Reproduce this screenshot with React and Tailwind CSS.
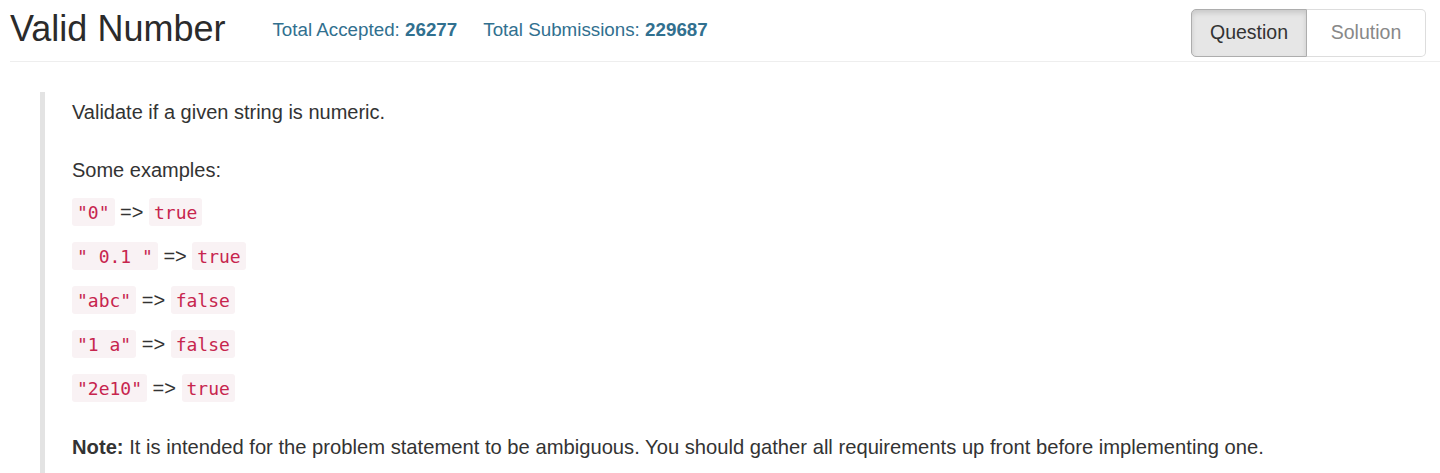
export default function App() {
  const examples = [
    ['"0"', "true"],
    ['" 0.1 "', "true"],
    ['"abc"', "false"],
    ['"1 a"', "false"],
    ['"2e10"', "true"],
  ];

  const Code = ({ children }) => (
    <code className="font-['DejaVu_Sans_Mono',monospace] text-[18px] leading-[20px] text-[#c7254e] bg-[#f9f2f4] rounded-[3px] px-[5px] pt-[4px] pb-[3px] whitespace-pre">
      {children}
    </code>
  );

  return (
    <div className="h-screen bg-white font-['Liberation_Sans',Arial,sans-serif] text-[#333] overflow-hidden">
      <div className="ml-[10px]">
        {/* Header */}
        <div className="flex items-start h-[62px] border-b border-[#eeeeee] pr-[14px]">
          <h1 className="text-[36px] leading-[43px] mt-[7px] font-normal text-[#2b2b2b]">
            Valid Number
          </h1>
          <div className="flex ml-[47px] mt-[19px] text-[18.8px] leading-[22px] text-[#31708f]">
            <span>
              Total Accepted: <b>26277</b>
            </span>
            <span className="ml-[26px]">
              Total Submissions: <b>229687</b>
            </span>
          </div>
          <div className="ml-auto mt-[9px] flex h-[48px] text-[19.5px]">
            <button className="w-[116px] h-full flex items-center justify-center bg-[#e6e6e6] border border-[#adadad] rounded-l-[5px] text-[#333] shadow-[inset_0_3px_5px_rgba(0,0,0,0.125)]">
              Question
            </button>
            <button className="w-[119px] h-full flex items-center justify-center bg-white border border-l-0 border-[#dddddd] rounded-r-[5px] text-[#888]">
              Solution
            </button>
          </div>
        </div>

        {/* Problem statement */}
        <div className="ml-[30px] mt-[30px] border-l-[5px] border-[#e3e3e3] pl-[27px] pt-[3px] pb-[9px] text-[20px]">
          <p className="leading-[34px]">Validate if a given string is numeric.</p>
          <p className="leading-[34px] mt-[24px]">Some examples:</p>
          <div className="mt-[8px]">
            {examples.map(([input, output], i) => (
              <p key={i} className={`leading-[34px] ${i > 0 ? "mt-[10px]" : ""}`}>
                <Code>{input}</Code> =&gt; <Code>{output}</Code>
              </p>
            ))}
          </div>
          <p className="leading-[34px] mt-[25px] text-[20.2px]">
            <b>Note:</b> It is intended for the problem statement to be ambiguous. You should gather all
            requirements up front before implementing one.
          </p>
        </div>
      </div>
    </div>
  );
}
